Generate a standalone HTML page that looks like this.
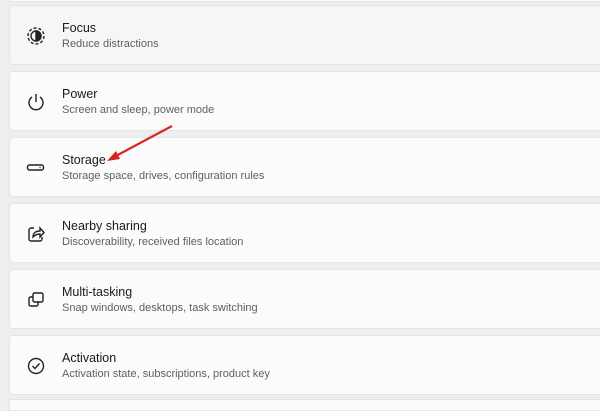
<!DOCTYPE html>
<html><head><style>
body{margin:0;width:600px;height:401px;background:#eeeeee;overflow:hidden;font-family:"Segoe UI","Liberation Sans",sans-serif;position:relative}
.c{position:absolute;left:9px;width:600px;height:60px;background:#fbfbfb;border:1px solid #e5e5e5;border-radius:4px;box-sizing:border-box}
.t{position:absolute;left:52px;top:15px;font-size:12.5px;color:#1a1a1a}
.s{position:absolute;left:52px;top:32px;font-size:11px;color:#5f5f5f}
svg.i{position:absolute;left:15px;top:19px}
</style></head><body>
<div style="position:absolute;left:9px;top:-10px;width:600px;height:12px;background:#fbfbfb;border:1px solid #e5e5e5;box-sizing:border-box"></div>
<div class="c" style="top:5px;background:#f6f6f6"><svg class="i" width="22" height="22" viewBox="0 0 22 22" fill="none" stroke="#222" stroke-width="1.4"><circle cx="11" cy="11" r="8" stroke-dasharray="3 2"/><circle cx="11" cy="11" r="5"/><path d="M11 6a5 5 0 0 1 0 10z" fill="#222"/></svg><div class="t">Focus</div><div class="s">Reduce distractions</div></div>
<div class="c" style="top:71px"><svg class="i" width="22" height="22" viewBox="0 0 22 22" fill="none" stroke="#222" stroke-width="1.4"><path d="M11 3v8"/><path d="M7 6a7 7 0 1 0 8 0"/></svg><div class="t">Power</div><div class="s">Screen and sleep, power mode</div></div>
<div class="c" style="top:137px"><svg class="i" width="22" height="22" viewBox="0 0 22 22" fill="none" stroke="#222" stroke-width="1.4"><rect x="2.5" y="8" width="16" height="5" rx="2"/><path d="M14.5 10.5h1"/></svg><div class="t">Storage</div><div class="s">Storage space, drives, configuration rules</div></div>
<div class="c" style="top:203px"><svg class="i" width="22" height="22" viewBox="0 0 22 22" fill="none" stroke="#222" stroke-width="1.4"><path d="M9 5H6a2 2 0 0 0-2 2v9a2 2 0 0 0 2 2h9a2 2 0 0 0 2-2v-2"/><path d="M8 14c0-4 3-6 7-6V5l4 4.5-4 4.5v-3c-3 0-5 1-7 3z"/></svg><div class="t">Nearby sharing</div><div class="s">Discoverability, received files location</div></div>
<div class="c" style="top:269px"><svg class="i" width="22" height="22" viewBox="0 0 22 22" fill="none" stroke="#222" stroke-width="1.4"><rect x="8" y="4" width="10" height="9" rx="1.5"/><path d="M8 8H5.5A1.5 1.5 0 0 0 4 9.5v6A1.5 1.5 0 0 0 5.5 17h6a1.5 1.5 0 0 0 1.5-1.5V13"/></svg><div class="t">Multi-tasking</div><div class="s">Snap windows, desktops, task switching</div></div>
<div class="c" style="top:335px"><svg class="i" width="22" height="22" viewBox="0 0 22 22" fill="none" stroke="#222" stroke-width="1.4"><circle cx="11" cy="11" r="7.5"/><path d="M7.5 11l2.5 2.5 4.5-5"/></svg><div class="t">Activation</div><div class="s">Activation state, subscriptions, product key</div></div>
<div style="position:absolute;left:9px;top:399px;width:600px;height:10px;background:#fbfbfb;border:1px solid #e5e5e5"></div>
<svg style="position:absolute;left:0;top:0" width="600" height="401"><path d="M172 126L114 157" stroke="#d9231e" stroke-width="2.2"/><path d="M107 161l13-2-4-8z" fill="#d9231e"/></svg>
</body></html>
